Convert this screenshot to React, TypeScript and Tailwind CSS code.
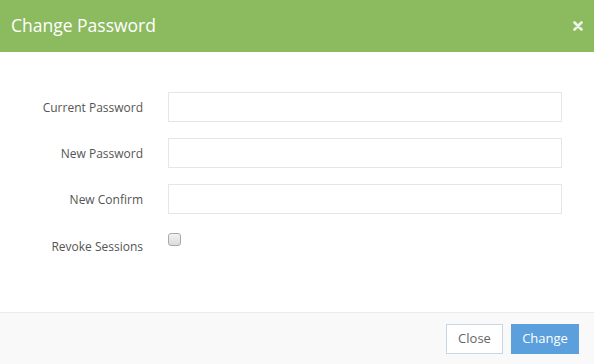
import React from 'react';

const font = { fontFamily: '"Open Sans", "Liberation Sans", sans-serif' };

const Row: React.FC<{ label: string }> = ({ label }) => (
  <div className="flex items-center">
    <label className="w-[143px] pt-[2px] text-right text-[12px] text-[#555]">{label}</label>
    <input
      type="password"
      className="ml-[25px] h-[30px] w-[394px] border border-[#e6e6e6] bg-white px-2 text-[12px] outline-none"
    />
  </div>
);

const App: React.FC = () => {
  return (
    <div className="flex h-[364px] w-[594px] flex-col bg-white" style={font}>
      <div className="flex h-[52px] shrink-0 items-center justify-between bg-[#8cba5f] pl-[11px] pr-[11px]">
        <h1 className="text-[17.5px] font-normal leading-none text-white">Change Password</h1>
        <button className="text-[#eef5e8]" aria-label="close">
          <svg width="10" height="10" viewBox="0 0 10 10">
            <path d="M1.5 1.5 L8.5 8.5 M8.5 1.5 L1.5 8.5" stroke="currentColor" strokeWidth="2.6" strokeLinecap="round" />
          </svg>
        </button>
      </div>

      <div className="flex flex-1 flex-col gap-[16px] pt-[40px]">
        <Row label="Current Password" />
        <Row label="New Password" />
        <Row label="New Confirm" />
        <div className="flex items-start">
          <label className="w-[143px] pt-[8px] text-right text-[12px] leading-[17px] text-[#555]">Revoke Sessions</label>
          <span className="ml-[25px] mt-[3px] block h-[13px] w-[13px] rounded-[3px] border border-[#a9a9a9] bg-gradient-to-b from-[#f2f2f2] to-[#dcdcdc]" />
        </div>
      </div>

      <div className="flex h-[52px] shrink-0 items-start justify-end gap-[8px] border-t border-[#ebebeb] bg-[#f9f9f9] pr-[15px] pt-[11px]">
        <button className="h-[30px] w-[57px] border border-[#c8d6e6] bg-white text-[13px] text-[#666]">Close</button>
        <button className="h-[30px] w-[68px] bg-[#5b9fdc] text-[13px] text-white">Change</button>
      </div>
    </div>
  );
};

export default App;
